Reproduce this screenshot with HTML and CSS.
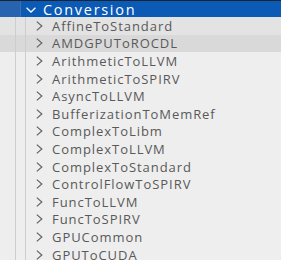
FILE: index.html
```html
<!DOCTYPE html>
<html lang="en">
<head>
    <meta charset="UTF-8">
    <title>explorer tree</title>
    <link rel="stylesheet" href="styles.css">
</head>
<body>
    <div class="tree">
        <div class="tree-header">
            <span class="header-gutter"></span>
            <svg class="chevron-down" width="10" height="6" viewBox="0 0 10 6">
                <polyline points="0.6,0.8 5,5 9.4,0.8" fill="none" stroke="#fff" stroke-width="1.3"/>
            </svg>
            <span class="header-label">Conversion</span>
        </div>

        <ul class="tree-list">
            <li class="tree-item focused"><span class="guide g1"></span><span class="guide g2"></span><svg class="chevron" width="7" height="10" viewBox="0 0 7 10"><polyline points="0.8,0.6 5.8,5 0.8,9.4" fill="none" stroke="#666" stroke-width="1.25"/></svg><span class="label">AffineToStandard</span></li>
            <li class="tree-item hover"><span class="guide g1"></span><span class="guide g2"></span><svg class="chevron" width="7" height="10" viewBox="0 0 7 10"><polyline points="0.8,0.6 5.8,5 0.8,9.4" fill="none" stroke="#666" stroke-width="1.25"/></svg><span class="label">AMDGPUToROCDL</span></li>
            <li class="tree-item"><span class="guide g1"></span><span class="guide g2"></span><svg class="chevron" width="7" height="10" viewBox="0 0 7 10"><polyline points="0.8,0.6 5.8,5 0.8,9.4" fill="none" stroke="#666" stroke-width="1.25"/></svg><span class="label">ArithmeticToLLVM</span></li>
            <li class="tree-item"><span class="guide g1"></span><span class="guide g2"></span><svg class="chevron" width="7" height="10" viewBox="0 0 7 10"><polyline points="0.8,0.6 5.8,5 0.8,9.4" fill="none" stroke="#666" stroke-width="1.25"/></svg><span class="label">ArithmeticToSPIRV</span></li>
            <li class="tree-item"><span class="guide g1"></span><span class="guide g2"></span><svg class="chevron" width="7" height="10" viewBox="0 0 7 10"><polyline points="0.8,0.6 5.8,5 0.8,9.4" fill="none" stroke="#666" stroke-width="1.25"/></svg><span class="label">AsyncToLLVM</span></li>
            <li class="tree-item"><span class="guide g1"></span><span class="guide g2"></span><svg class="chevron" width="7" height="10" viewBox="0 0 7 10"><polyline points="0.8,0.6 5.8,5 0.8,9.4" fill="none" stroke="#666" stroke-width="1.25"/></svg><span class="label">BufferizationToMemRef</span></li>
            <li class="tree-item"><span class="guide g1"></span><span class="guide g2"></span><svg class="chevron" width="7" height="10" viewBox="0 0 7 10"><polyline points="0.8,0.6 5.8,5 0.8,9.4" fill="none" stroke="#666" stroke-width="1.25"/></svg><span class="label">ComplexToLibm</span></li>
            <li class="tree-item"><span class="guide g1"></span><span class="guide g2"></span><svg class="chevron" width="7" height="10" viewBox="0 0 7 10"><polyline points="0.8,0.6 5.8,5 0.8,9.4" fill="none" stroke="#666" stroke-width="1.25"/></svg><span class="label">ComplexToLLVM</span></li>
            <li class="tree-item"><span class="guide g1"></span><span class="guide g2"></span><svg class="chevron" width="7" height="10" viewBox="0 0 7 10"><polyline points="0.8,0.6 5.8,5 0.8,9.4" fill="none" stroke="#666" stroke-width="1.25"/></svg><span class="label">ComplexToStandard</span></li>
            <li class="tree-item"><span class="guide g1"></span><span class="guide g2"></span><svg class="chevron" width="7" height="10" viewBox="0 0 7 10"><polyline points="0.8,0.6 5.8,5 0.8,9.4" fill="none" stroke="#666" stroke-width="1.25"/></svg><span class="label">ControlFlowToSPIRV</span></li>
            <li class="tree-item"><span class="guide g1"></span><span class="guide g2"></span><svg class="chevron" width="7" height="10" viewBox="0 0 7 10"><polyline points="0.8,0.6 5.8,5 0.8,9.4" fill="none" stroke="#666" stroke-width="1.25"/></svg><span class="label">FuncToLLVM</span></li>
            <li class="tree-item"><span class="guide g1"></span><span class="guide g2"></span><svg class="chevron" width="7" height="10" viewBox="0 0 7 10"><polyline points="0.8,0.6 5.8,5 0.8,9.4" fill="none" stroke="#666" stroke-width="1.25"/></svg><span class="label">FuncToSPIRV</span></li>
            <li class="tree-item"><span class="guide g1"></span><span class="guide g2"></span><svg class="chevron" width="7" height="10" viewBox="0 0 7 10"><polyline points="0.8,0.6 5.8,5 0.8,9.4" fill="none" stroke="#666" stroke-width="1.25"/></svg><span class="label">GPUCommon</span></li>
            <li class="tree-item"><span class="guide g1"></span><span class="guide g2"></span><svg class="chevron" width="7" height="10" viewBox="0 0 7 10"><polyline points="0.8,0.6 5.8,5 0.8,9.4" fill="none" stroke="#666" stroke-width="1.25"/></svg><span class="label">GPUToCUDA</span></li>
        </ul>
    </div>
</body>
</html>
```

FILE: styles.css
```css
* {
    margin: 0;
    padding: 0;
    box-sizing: border-box;
}

body {
    font-family: "Open Sans", "Noto Sans", sans-serif;
    background-color: #eeeeee;
    overflow: hidden;
}

.tree {
    width: 281px;
}

.tree-header {
    display: flex;
    align-items: center;
    height: 17px;
    border-top: 1px solid #1c2430;
    background: #0a5ab6;
    color: white;
}

.header-gutter {
    align-self: stretch;
    width: 21px;
    background: #2863b0;
    border-right: 1px solid #3f6fae;
}

.chevron-down {
    margin-left: 5px;
    margin-top: 1px;
}

.header-label {
    margin-left: 7px;
    font-size: 14.5px;
    letter-spacing: 1.7px;
}

.tree-list {
    list-style: none;
}

.tree-item {
    display: flex;
    align-items: center;
    height: 17.6px;
    color: #595959;
    font-size: 13px;
    letter-spacing: 0.95px;
}

.tree-item.focused {
    background: #e3e3e3;
}

.tree-item.hover {
    background: #d9d9d9;
}

.guide {
    align-self: stretch;
    border-right: 1px solid #cdcdcd;
}

.g1 {
    width: 16px;
}

.g2 {
    width: 10px;
}

.chevron {
    margin-left: 10px;
}

.label {
    margin-left: 9px;
}
```
